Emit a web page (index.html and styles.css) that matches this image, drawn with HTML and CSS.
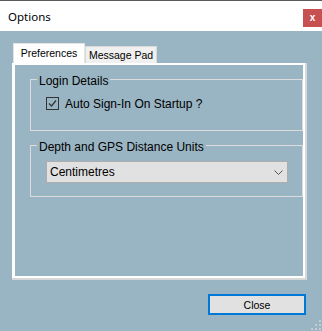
FILE: index.html
```html
<!DOCTYPE html>
<html lang="en">
<head>
  <meta charset="UTF-8">
  <meta name="viewport" content="width=device-width, initial-scale=1.0">
  <title>Options</title>
  <link rel="stylesheet" href="styles.css">
</head>
<body>
  <div class="window">
    <div class="titlebar">
      <span class="title">Options</span>
      <span class="close-x">x</span>
    </div>

    <div class="dialog-body">
      <div class="tabs">
        <div class="tab tab-active">Preferences</div>
        <div class="tab">Message Pad</div>
      </div>

      <div class="tab-panel">
        <div class="tab-page">
          <fieldset class="group">
            <legend>Login Details</legend>
            <label class="check-row">
              <span class="checkbox">
                <svg width="11" height="11" viewBox="0 0 11 11">
                  <polyline points="2,5.5 4.5,8 9,2.5" fill="none" stroke="#333" stroke-width="1.2"/>
                </svg>
              </span>
              Auto Sign-In On Startup ?
            </label>
          </fieldset>

          <fieldset class="group">
            <legend>Depth and GPS Distance Units</legend>
            <div class="combo">
              <span>Centimetres</span>
              <svg width="9" height="5" viewBox="0 0 9 5">
                <polyline points="0.5,0.5 4.5,4.5 8.5,0.5" fill="none" stroke="#555" stroke-width="1"/>
              </svg>
            </div>
          </fieldset>
        </div>
      </div>

      <div class="footer">
        <button class="btn-close">Close</button>
      </div>
    </div>

    <svg class="grip" width="10" height="10" viewBox="0 0 10 10">
      <rect x="8" y="0" width="2" height="2"/>
      <rect x="4" y="4" width="2" height="2"/>
      <rect x="8" y="4" width="2" height="2"/>
      <rect x="0" y="8" width="2" height="2"/>
      <rect x="4" y="8" width="2" height="2"/>
      <rect x="8" y="8" width="2" height="2"/>
    </svg>
  </div>
</body>
</html>
```

FILE: styles.css
```css
body {
  margin: 0;
  background-color: #99b4c2;
  font-family: 'Liberation Sans', Arial, sans-serif;
  font-size: 12px;
  color: #000;
}

.window {
  position: relative;
  width: 322px;
  height: 331px;
  overflow: hidden;
}

.titlebar {
  height: 30px;
  border-top: 1px solid #5a5a5a;
  background: #fff;
  display: flex;
  justify-content: space-between;
  align-items: center;
}

.title {
  padding-left: 8px;
  font-family: 'Noto Sans', 'Open Sans', sans-serif;
  font-size: 11.5px;
}

.close-x {
  width: 19px;
  height: 18px;
  margin-top: 3px;
  background: #c75050;
  color: #fff;
  font-size: 10px;
  font-weight: bold;
  display: flex;
  justify-content: center;
  align-items: center;
}

.dialog-body {
  padding: 12px 15px 0 12px;
}

.tabs {
  display: flex;
  align-items: flex-end;
  margin-left: 1px;
  height: 20px;
}

.tab {
  box-sizing: border-box;
  width: 72px;
  height: 17px;
  padding-top: 2px;
  line-height: 12px;
  font-size: 10.5px;
  text-align: center;
  background: #f0f0f0;
  border: 1px solid #d9d9d9;
  border-bottom: none;
}

.tab-active {
  height: 20px;
  padding-top: 3px;
  background: #fff;
  border-color: #e3e3e3;
}

.tab-panel {
  box-sizing: border-box;
  width: 295px;
  height: 217px;
  background: #fff;
  padding: 2px 2px 2px 3px;
  border-right: 2px solid #d8d8d8;
  border-bottom: 2px solid #d8d8d8;
}

.tab-page {
  height: 100%;
  background: #99b4c2;
  padding-top: 5px;
  box-sizing: border-box;
}

.group {
  box-sizing: border-box;
  height: 61px;
  margin: 0 0 5px 15px;
  padding: 0;
  min-width: 0;
  border: 1px solid #dcdcdc;
}

.group legend {
  margin-left: 6px;
  padding: 4px 2px 0 2px;
  line-height: 14px;
}

.check-row {
  display: flex;
  align-items: center;
  gap: 6px;
  margin: 9px 0 0 15px;
  height: 13px;
}

.checkbox {
  box-sizing: border-box;
  width: 13px;
  height: 13px;
  border: 1px solid #333;
  display: flex;
  justify-content: center;
  align-items: center;
}

.combo {
  box-sizing: border-box;
  width: 242px;
  height: 22px;
  margin: 7px 0 0 15px;
  padding: 0 4px 0 3px;
  background: #e1e1e1;
  border: 1px solid #adadad;
  display: flex;
  justify-content: space-between;
  align-items: center;
}

.footer {
  display: flex;
  justify-content: flex-end;
  margin-top: 14px;
  padding-right: 1px;
}

.btn-close {
  box-sizing: border-box;
  width: 98px;
  height: 21px;
  padding: 0;
  background: #e1e1e1;
  border: 2px solid #0078d7;
  font-family: 'Liberation Sans', Arial, sans-serif;
  font-size: 10.5px;
  color: #000;
}

.grip {
  position: absolute;
  right: 1px;
  bottom: 1px;
  fill: #c2ccd2;
}
```
